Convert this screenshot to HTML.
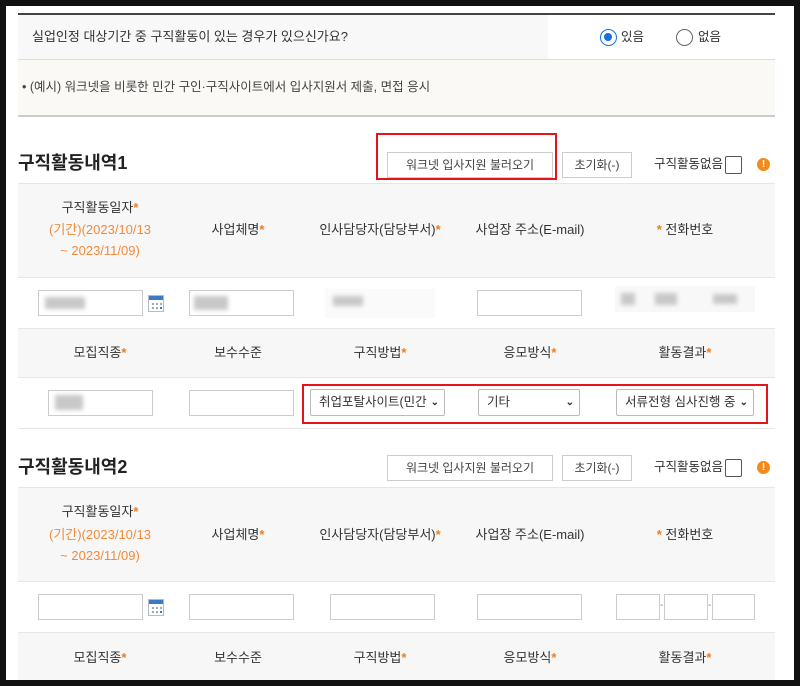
<!DOCTYPE html>
<html><head><meta charset="utf-8"><style>
*{margin:0;padding:0;box-sizing:border-box}
body{width:800px;height:686px;background:#111;position:relative;overflow:hidden;font-family:"Liberation Sans","Noto Sans CJK KR",sans-serif;color:#333;font-size:13px}
.a{position:absolute}
#pg{left:6px;top:6px;width:788px;height:674px;background:#fff}
.t{position:absolute;white-space:nowrap;transform:translateX(-50%);font-size:13px;color:#333;line-height:16px}
.s{color:#f07c1c;font-weight:bold}
.o{color:#f28a3a}
.in{position:absolute;height:26px;border:1px solid #ccc;background:#fff}
.bl{filter:blur(2px);background:#c8c8c8;position:absolute}
.btn{position:absolute;height:26px;border:1px solid #ccc;background:#fff;font-size:12px;color:#444;text-align:center;line-height:24px}
.sel{position:absolute;height:27px;border:1px solid #bbb;border-radius:2px;background:#fff;font-size:12.5px;color:#333;line-height:25px;padding-left:8px;overflow:hidden;white-space:nowrap}
.sel b{position:absolute;right:5px;top:0;font-size:10px;background:#fff;padding-left:2px}
.hb{background:#f7f7f7;left:18px;width:757px}
.cal{position:absolute;width:16px;height:17px;border:1px solid #bbb;background:#fff}
.cal:before{content:"";position:absolute;left:0;top:0;right:0;height:4px;background:#3a79c4}
.cal:after{content:"";position:absolute;left:3px;top:7px;width:2px;height:2px;background:#9ab;box-shadow:4px 0 #9ab,8px 0 #9ab,0 4px #9ab,4px 4px #9ab,8px 4px #3a79c4}
h2{position:absolute;font-size:18px;font-weight:bold;color:#222;left:18px;line-height:22px}
.chk{position:absolute;width:17px;height:18px;border:1px solid #555;border-radius:2px;background:#fff}
.ex{position:absolute;width:13px;height:13px;border-radius:50%;background:#f28a1c;color:#fff;font-size:10px;font-weight:bold;text-align:center;line-height:13px}
</style></head><body>
<div class="a" id="pg"></div>
<div class="a" style="left:18px;top:13px;width:757px;height:2px;background:#444"></div>
<div class="a" style="left:18px;top:15px;width:530px;height:44px;background:#f8f8f8"></div>
<div class="a" style="left:18px;top:59px;width:757px;height:1px;background:#ddd"></div>
<div class="a" style="left:32px;top:29px;font-size:13px;color:#333;line-height:16px">실업인정 대상기간 중 구직활동이 있는 경우가 있으신가요?</div>
<div class="a" style="left:600px;top:29px;width:17px;height:17px;border-radius:50%;border:1.5px solid #1a6fd8;background:#fff"><div style="position:absolute;left:3px;top:3px;width:8px;height:8px;border-radius:50%;background:#1a6fd8"></div></div>
<div class="a" style="left:621px;top:30px;font-size:12.5px;line-height:15px">있음</div>
<div class="a" style="left:676px;top:29px;width:17px;height:17px;border-radius:50%;border:1px solid #666;background:#fff"></div>
<div class="a" style="left:698px;top:30px;font-size:12.5px;line-height:15px">없음</div>
<div class="a" style="left:18px;top:60px;width:757px;height:55px;background:#faf9f6"></div>
<div class="a" style="left:18px;top:115px;width:757px;height:2px;background:#ccc"></div>
<div class="a" style="left:22px;top:79px;font-size:12.5px;color:#444;line-height:16px">• (예시) 워크넷을 비롯한 민간 구인·구직사이트에서 입사지원서 제출, 면접 응시</div>

<!-- section 1 -->
<h2 style="top:152px">구직활동내역1</h2>
<div class="btn" style="left:387px;top:152px;width:166px">워크넷 입사지원 불러오기</div>
<div class="btn" style="left:562px;top:152px;width:70px">초기화(-)</div>
<div class="a" style="left:654px;top:156px;font-size:12.5px;line-height:16px">구직활동없음</div>
<div class="chk" style="left:725px;top:156px"></div>
<div class="ex" style="left:757px;top:158px">!</div>
<div class="a" style="left:376px;top:133px;width:181px;height:47px;border:2px solid #e8121b"></div>

<div class="a hb" style="top:183px;height:94px;border-top:1px solid #e6e6e6"></div>
<div class="t" style="left:100px;top:200px">구직활동일자<span class="s">*</span></div>
<div class="t o" style="left:100px;top:222px">(기간)(2023/10/13</div>
<div class="t o" style="left:100px;top:243px">~ 2023/11/09)</div>
<div class="t" style="left:238px;top:222px">사업체명<span class="s">*</span></div>
<div class="t" style="left:380px;top:222px">인사담당자(담당부서)<span class="s">*</span></div>
<div class="t" style="left:530px;top:222px">사업장 주소(E-mail)</div>
<div class="t" style="left:685px;top:222px"><span class="s">*</span> 전화번호</div>
<div class="a" style="left:18px;top:277px;width:757px;height:1px;background:#e6e6e6"></div>
<div class="in" style="left:38px;top:290px;width:105px"><div class="bl" style="left:6px;top:6px;width:40px;height:12px"></div></div>
<div class="cal" style="left:148px;top:295px"></div>
<div class="in" style="left:189px;top:290px;width:105px"><div class="bl" style="left:4px;top:5px;width:34px;height:14px"></div></div>
<div class="a" style="left:325px;top:289px;width:110px;height:29px;background:#fafafa"><div class="bl" style="left:8px;top:7px;width:30px;height:10px"></div></div>
<div class="in" style="left:477px;top:290px;width:105px"></div>
<div class="a" style="left:615px;top:286px;width:140px;height:26px;background:#f8f8f8"><div class="bl" style="left:6px;top:7px;width:14px;height:12px"></div><div class="bl" style="left:40px;top:7px;width:22px;height:12px"></div><div class="bl" style="left:98px;top:8px;width:24px;height:10px"></div></div>

<div class="a hb" style="top:328px;height:49px;border-top:1px solid #e6e6e6"></div>
<div class="t" style="left:100px;top:345px">모집직종<span class="s">*</span></div>
<div class="t" style="left:238px;top:345px">보수수준</div>
<div class="t" style="left:380px;top:345px">구직방법<span class="s">*</span></div>
<div class="t" style="left:530px;top:345px">응모방식<span class="s">*</span></div>
<div class="t" style="left:685px;top:345px">활동결과<span class="s">*</span></div>
<div class="a" style="left:18px;top:377px;width:757px;height:1px;background:#e6e6e6"></div>
<div class="in" style="left:48px;top:390px;width:105px"><div class="bl" style="left:6px;top:4px;width:28px;height:15px"></div></div>
<div class="in" style="left:189px;top:390px;width:105px"></div>
<div class="sel" style="left:310px;top:389px;width:135px">취업포탈사이트(민간<b>⌄</b></div>
<div class="sel" style="left:478px;top:389px;width:102px">기타<b>⌄</b></div>
<div class="sel" style="left:616px;top:389px;width:138px">서류전형 심사진행 중<b>⌄</b></div>
<div class="a" style="left:302px;top:384px;width:466px;height:40px;border:2px solid #e8121b"></div>
<div class="a" style="left:18px;top:428px;width:757px;height:1px;background:#e6e6e6"></div>

<!-- section 2 -->
<h2 style="top:456px">구직활동내역2</h2>
<div class="btn" style="left:387px;top:455px;width:166px">워크넷 입사지원 불러오기</div>
<div class="btn" style="left:562px;top:455px;width:70px">초기화(-)</div>
<div class="a" style="left:654px;top:459px;font-size:12.5px;line-height:16px">구직활동없음</div>
<div class="chk" style="left:725px;top:459px"></div>
<div class="ex" style="left:757px;top:461px">!</div>

<div class="a hb" style="top:487px;height:94px;border-top:1px solid #e6e6e6"></div>
<div class="t" style="left:100px;top:504px">구직활동일자<span class="s">*</span></div>
<div class="t o" style="left:100px;top:527px">(기간)(2023/10/13</div>
<div class="t o" style="left:100px;top:548px">~ 2023/11/09)</div>
<div class="t" style="left:238px;top:527px">사업체명<span class="s">*</span></div>
<div class="t" style="left:380px;top:527px">인사담당자(담당부서)<span class="s">*</span></div>
<div class="t" style="left:530px;top:527px">사업장 주소(E-mail)</div>
<div class="t" style="left:685px;top:527px"><span class="s">*</span> 전화번호</div>
<div class="a" style="left:18px;top:581px;width:757px;height:1px;background:#e6e6e6"></div>
<div class="in" style="left:38px;top:594px;width:105px"></div>
<div class="cal" style="left:148px;top:599px"></div>
<div class="in" style="left:189px;top:594px;width:105px"></div>
<div class="in" style="left:330px;top:594px;width:105px"></div>
<div class="in" style="left:477px;top:594px;width:105px"></div>
<div class="in" style="left:616px;top:594px;width:44px"></div>
<div class="a" style="left:660px;top:600px;font-size:10px;color:#888">-</div>
<div class="in" style="left:664px;top:594px;width:44px"></div>
<div class="a" style="left:708px;top:600px;font-size:10px;color:#888">-</div>
<div class="in" style="left:712px;top:594px;width:43px"></div>
<div class="a hb" style="top:632px;height:48px;border-top:1px solid #e6e6e6"></div>
<div class="t" style="left:100px;top:650px">모집직종<span class="s">*</span></div>
<div class="t" style="left:238px;top:650px">보수수준</div>
<div class="t" style="left:380px;top:650px">구직방법<span class="s">*</span></div>
<div class="t" style="left:530px;top:650px">응모방식<span class="s">*</span></div>
<div class="t" style="left:685px;top:650px">활동결과<span class="s">*</span></div>
</body></html>
